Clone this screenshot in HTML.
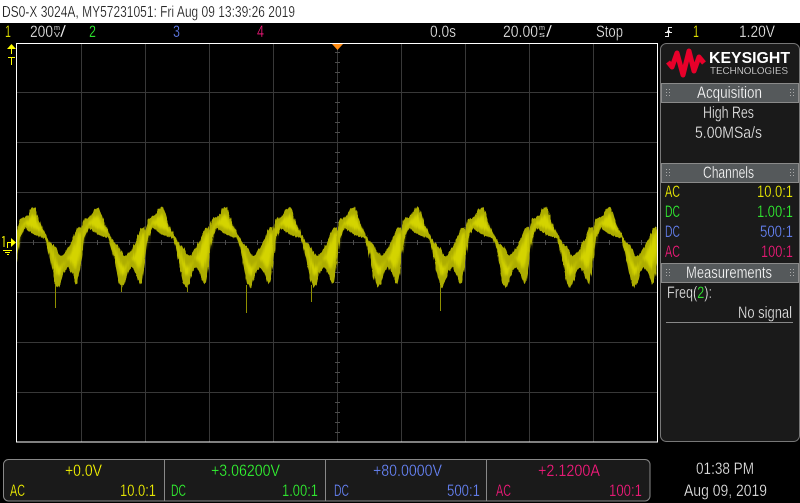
<!DOCTYPE html>
<html><head><meta charset="utf-8"><style>
html,body{margin:0;padding:0;background:#000;width:800px;height:503px;overflow:hidden}
svg{display:block}
text{font-family:"Liberation Sans",sans-serif;font-size:16.5px}
</style></head><body>
<svg width="800" height="503" viewBox="0 0 800 503" xmlns="http://www.w3.org/2000/svg">
<rect width="800" height="503" fill="#000"/>
<rect width="800" height="23" fill="#fff"/>
<text x="2" y="17" textLength="293" lengthAdjust="spacingAndGlyphs" fill="#000" stroke="#fff" stroke-width=".3" style="font-size:16px">DS0-X 3024A, MY57231051: Fri Aug 09 13:39:26 2019</text>

<!-- grid -->
<g stroke="#383838" stroke-width="1" shape-rendering="crispEdges">
<path d="M81.5 43V442M145.5 43V442M209.5 43V442M273.5 43V442M337.5 43V442M401.5 43V442M465.5 43V442M529.5 43V442M593.5 43V442"/>
<path d="M17 92.5H657M17 142.5H657M17 192.5H657M17 242.5H657M17 292.5H657M17 342.5H657M17 392.5H657"/>
<path stroke="#4c4c4c" d="M335 52.5h5M335 62.5h5M335 72.5h5M335 82.5h5M335 102.5h5M335 112.5h5M335 122.5h5M335 132.5h5M335 152.5h5M335 162.5h5M335 172.5h5M335 182.5h5M335 202.5h5M335 212.5h5M335 222.5h5M335 232.5h5M335 252.5h5M335 262.5h5M335 272.5h5M335 282.5h5M335 302.5h5M335 312.5h5M335 322.5h5M335 332.5h5M335 352.5h5M335 362.5h5M335 372.5h5M335 382.5h5M335 402.5h5M335 412.5h5M335 422.5h5M335 432.5h5"/>
<path stroke="#4c4c4c" d="M33.5 240v5M65.5 240v5M97.5 240v5M129.5 240v5M161.5 240v5M193.5 240v5M225.5 240v5M257.5 240v5M289.5 240v5M321.5 240v5M353.5 240v5M385.5 240v5M417.5 240v5M449.5 240v5M481.5 240v5M513.5 240v5M545.5 240v5M577.5 240v5M609.5 240v5M641.5 240v5"/>
</g>

<!-- waveform -->
<defs>
<clipPath id="pl"><rect x="17" y="44" width="640" height="398"/></clipPath>
<filter id="soft" x="-10%" y="-10%" width="120%" height="120%"><feGaussianBlur stdDeviation="1.3"/></filter>
<filter id="jag" x="-2%" y="-20%" width="104%" height="140%">
<feTurbulence type="fractalNoise" baseFrequency=".7 .03" numOctaves="1" seed="4"/>
<feDisplacementMap in="SourceGraphic" scale="4" xChannelSelector="R" yChannelSelector="G"/>
</filter>
<g id="w">
<polygon fill="#adad00" points="-18,231 -15,219 -10,217 -7,214 -5,209 -3,208 0,207 2,212 4,219 6,225 10,233 15,242 20,247 25,256 28,255 33,248 38,238 42,228 46,227 46,263 45,270 43,283 41,284 37,273 33,267 29,272 26,283 23,288 20,283 17,268 14,252 10,238 5,237 0,235 -5,232 -10,228 -15,238 -18,262"/>
<polygon fill="#d4d400" filter="url(#soft)" points="-16,232 -12,224 -6,218 -1,214 3,222 7,230 12,240 17,250 21,262 25,268 29,262 34,256 39,245 43,234 46,232 46,250 43,262 40,270 36,262 32,258 28,266 25,275 22,275 18,262 14,246 9,234 3,230 -3,228 -10,224 -14,232 -17,250"/>
</g>
</defs>
<g clip-path="url(#pl)">
<g filter="url(#jag)">
<use href="#w" x="-29"/><use href="#w" x="35"/><use href="#w" x="99"/><use href="#w" x="163"/><use href="#w" x="227"/><use href="#w" x="291"/><use href="#w" x="355"/><use href="#w" x="419"/><use href="#w" x="483"/><use href="#w" x="547"/><use href="#w" x="611"/><use href="#w" x="675"/>
</g>
<g stroke="#8f8f00" stroke-width="1" shape-rendering="crispEdges">
<path d="M55.5 285V308M246.5 285V313M311.5 285V302M440.5 285V311M121.5 285V292M187.5 285V292"/>
</g>
</g>

<!-- plot frame -->
<rect x="16.5" y="43.5" width="641" height="398.5" fill="none" stroke="#fff" stroke-width="1" shape-rendering="crispEdges"/>

<!-- markers -->
<polygon points="7,49 11.5,44 16,49" fill="#ff0"/>
<path d="M11.5 48V54M8 57.5H15M11.5 57V65" stroke="#ff0" stroke-width="1" fill="none" shape-rendering="crispEdges"/>
<polygon points="332,44 343,44 337.5,50" fill="#ff8c14"/>
<polygon points="11,238 16,242.5 11,247" fill="#ff0"/>
<path d="M2 237.5l2-1V247M7.5 248V242.5H11M3 250.5H12M5 252.5H10M7 254.5H9" stroke="#ff0" stroke-width="1" fill="none" shape-rendering="crispEdges"/>

<!-- status row -->
<g stroke="#000" stroke-width=".3">
<text x="5" y="37" textLength="6" lengthAdjust="spacingAndGlyphs" fill="#ff0">1</text>
<text x="30" y="37" textLength="23" lengthAdjust="spacingAndGlyphs" fill="#eee">200</text>
<text x="54" y="30" textLength="6" lengthAdjust="spacingAndGlyphs" fill="#ddd" style="font-size:7px" stroke="none">m</text>
<text x="54" y="37" textLength="6" lengthAdjust="spacingAndGlyphs" fill="#ddd" style="font-size:7px" stroke="none">V</text>
<text x="60" y="37" textLength="6" lengthAdjust="spacingAndGlyphs" fill="#eee">/</text>
<text x="89" y="37" textLength="7" lengthAdjust="spacingAndGlyphs" fill="#3f3">2</text>
<text x="173" y="37" textLength="7" lengthAdjust="spacingAndGlyphs" fill="#6a88ff">3</text>
<text x="257" y="37" textLength="7" lengthAdjust="spacingAndGlyphs" fill="#ff1a80">4</text>
<text x="430" y="37" textLength="26" lengthAdjust="spacingAndGlyphs" fill="#eee">0.0s</text>
<text x="503" y="37" textLength="35" lengthAdjust="spacingAndGlyphs" fill="#eee">20.00</text>
<text x="539" y="30" textLength="6" lengthAdjust="spacingAndGlyphs" fill="#ddd" style="font-size:7px" stroke="none">m</text>
<text x="539" y="37" textLength="6" lengthAdjust="spacingAndGlyphs" fill="#ddd" style="font-size:7px" stroke="none">s</text>
<text x="546" y="37" textLength="6" lengthAdjust="spacingAndGlyphs" fill="#eee">/</text>
<text x="596" y="37" textLength="27" lengthAdjust="spacingAndGlyphs" fill="#eee">Stop</text>
<text x="693" y="37" textLength="6" lengthAdjust="spacingAndGlyphs" fill="#ff0">1</text>
<text x="739" y="37" textLength="36" lengthAdjust="spacingAndGlyphs" fill="#eee">1.20V</text>
</g>
<path d="M665 36.5H668.5V27.5H672M665 32.5H672" stroke="#eee" stroke-width="1" fill="none" shape-rendering="crispEdges"/>
<polygon points="666,33 668.5,29 671,33" fill="#eee"/>

<!-- right panel -->
<rect x="660.5" y="43.5" width="139" height="398" rx="6" fill="#1a1a1a" stroke="#777"/>
<path d="M668 62L672 67L677 53L683 75L689 51L694 71L699 57L704 63" stroke="#e8002a" stroke-width="5" fill="none" stroke-linejoin="round"/>
<text x="709" y="63" textLength="81" lengthAdjust="spacingAndGlyphs" fill="#fff" style="font-size:16px;font-weight:bold">KEYSIGHT</text>
<text x="710" y="74" textLength="78" lengthAdjust="spacingAndGlyphs" fill="#eee" stroke="#1a1a1a" stroke-width=".2" style="font-size:10px">TECHNOLOGIES</text>

<g fill="#55595b" stroke="#8a8a8a" shape-rendering="crispEdges">
<rect x="661.5" y="83.5" width="137" height="19"/>
<rect x="661.5" y="163.5" width="137" height="19"/>
<rect x="661.5" y="263.5" width="137" height="19"/>
</g>
<g fill="#aaa" shape-rendering="crispEdges">
<path d="M666 89h1v1h-1zM669 89h1v1h-1zM666 92h1v1h-1zM669 92h1v1h-1zM666 95h1v1h-1zM669 95h1v1h-1zM790 89h1v1h-1zM793 89h1v1h-1zM790 92h1v1h-1zM793 92h1v1h-1zM790 95h1v1h-1zM793 95h1v1h-1z"/>
<path d="M666 169h1v1h-1zM669 169h1v1h-1zM666 172h1v1h-1zM669 172h1v1h-1zM666 175h1v1h-1zM669 175h1v1h-1zM790 169h1v1h-1zM793 169h1v1h-1zM790 172h1v1h-1zM793 172h1v1h-1zM790 175h1v1h-1zM793 175h1v1h-1z"/>
<path d="M666 269h1v1h-1zM669 269h1v1h-1zM666 272h1v1h-1zM669 272h1v1h-1zM666 275h1v1h-1zM669 275h1v1h-1zM790 269h1v1h-1zM793 269h1v1h-1zM790 272h1v1h-1zM793 272h1v1h-1zM790 275h1v1h-1zM793 275h1v1h-1z"/>
</g>
<g stroke="#55595b" stroke-width=".3" fill="#fff">
<text x="697" y="98" textLength="65" lengthAdjust="spacingAndGlyphs">Acquisition</text>
<text x="703" y="178" textLength="51" lengthAdjust="spacingAndGlyphs">Channels</text>
<text x="686" y="278" textLength="86" lengthAdjust="spacingAndGlyphs">Measurements</text>
</g>
<g stroke="#1a1a1a" stroke-width=".3">
<text x="703" y="118" textLength="51" lengthAdjust="spacingAndGlyphs" fill="#eee">High Res</text>
<text x="695" y="138" textLength="67" lengthAdjust="spacingAndGlyphs" fill="#eee">5.00MSa/s</text>
<text x="665" y="197" textLength="15" lengthAdjust="spacingAndGlyphs" fill="#ff0">AC</text>
<text x="757" y="197" textLength="36" lengthAdjust="spacingAndGlyphs" fill="#ff0">10.0:1</text>
<text x="665" y="217" textLength="15" lengthAdjust="spacingAndGlyphs" fill="#3f3">DC</text>
<text x="757" y="217" textLength="36" lengthAdjust="spacingAndGlyphs" fill="#3f3">1.00:1</text>
<text x="665" y="237" textLength="15" lengthAdjust="spacingAndGlyphs" fill="#6a88ff">DC</text>
<text x="760" y="237" textLength="33" lengthAdjust="spacingAndGlyphs" fill="#6a88ff">500:1</text>
<text x="665" y="257" textLength="15" lengthAdjust="spacingAndGlyphs" fill="#ff1a80">AC</text>
<text x="761" y="257" textLength="32" lengthAdjust="spacingAndGlyphs" fill="#ff1a80">100:1</text>
<text x="667" y="298" textLength="45" lengthAdjust="spacingAndGlyphs" fill="#eee">Freq(<tspan fill="#3f3">2</tspan>):</text>
<text x="738" y="318" textLength="54" lengthAdjust="spacingAndGlyphs" fill="#eee">No signal</text>
</g>
<path d="M666 322.5H793" stroke="#888" shape-rendering="crispEdges"/>

<!-- bottom bar -->
<rect x="3.5" y="459.5" width="646.5" height="41.5" rx="5" fill="#1a1a1a" stroke="#888"/>
<path d="M164.5 460V501M325.5 460V501M486.5 460V501" stroke="#888" shape-rendering="crispEdges"/>
<g stroke="#1a1a1a" stroke-width=".3">
<text x="65" y="476" textLength="37" lengthAdjust="spacingAndGlyphs" fill="#ff0">+0.0V</text>
<text x="10" y="496" textLength="15" lengthAdjust="spacingAndGlyphs" fill="#ff0">AC</text>
<text x="120" y="496" textLength="36" lengthAdjust="spacingAndGlyphs" fill="#ff0">10.0:1</text>
<text x="211" y="476" textLength="69" lengthAdjust="spacingAndGlyphs" fill="#3f3">+3.06200V</text>
<text x="171" y="496" textLength="15" lengthAdjust="spacingAndGlyphs" fill="#3f3">DC</text>
<text x="282" y="496" textLength="36" lengthAdjust="spacingAndGlyphs" fill="#3f3">1.00:1</text>
<text x="373" y="476" textLength="69" lengthAdjust="spacingAndGlyphs" fill="#6a88ff">+80.0000V</text>
<text x="334" y="496" textLength="15" lengthAdjust="spacingAndGlyphs" fill="#6a88ff">DC</text>
<text x="447" y="496" textLength="33" lengthAdjust="spacingAndGlyphs" fill="#6a88ff">500:1</text>
<text x="538" y="476" textLength="62" lengthAdjust="spacingAndGlyphs" fill="#ff1a80">+2.1200A</text>
<text x="496" y="496" textLength="15" lengthAdjust="spacingAndGlyphs" fill="#ff1a80">AC</text>
<text x="609" y="496" textLength="33" lengthAdjust="spacingAndGlyphs" fill="#ff1a80">100:1</text>
</g>
<g stroke="#000" stroke-width=".3" fill="#eee">
<text x="696" y="474" textLength="58" lengthAdjust="spacingAndGlyphs">01:38 PM</text>
<text x="684" y="496" textLength="83" lengthAdjust="spacingAndGlyphs">Aug 09, 2019</text>
</g>
</svg>
</body></html>
